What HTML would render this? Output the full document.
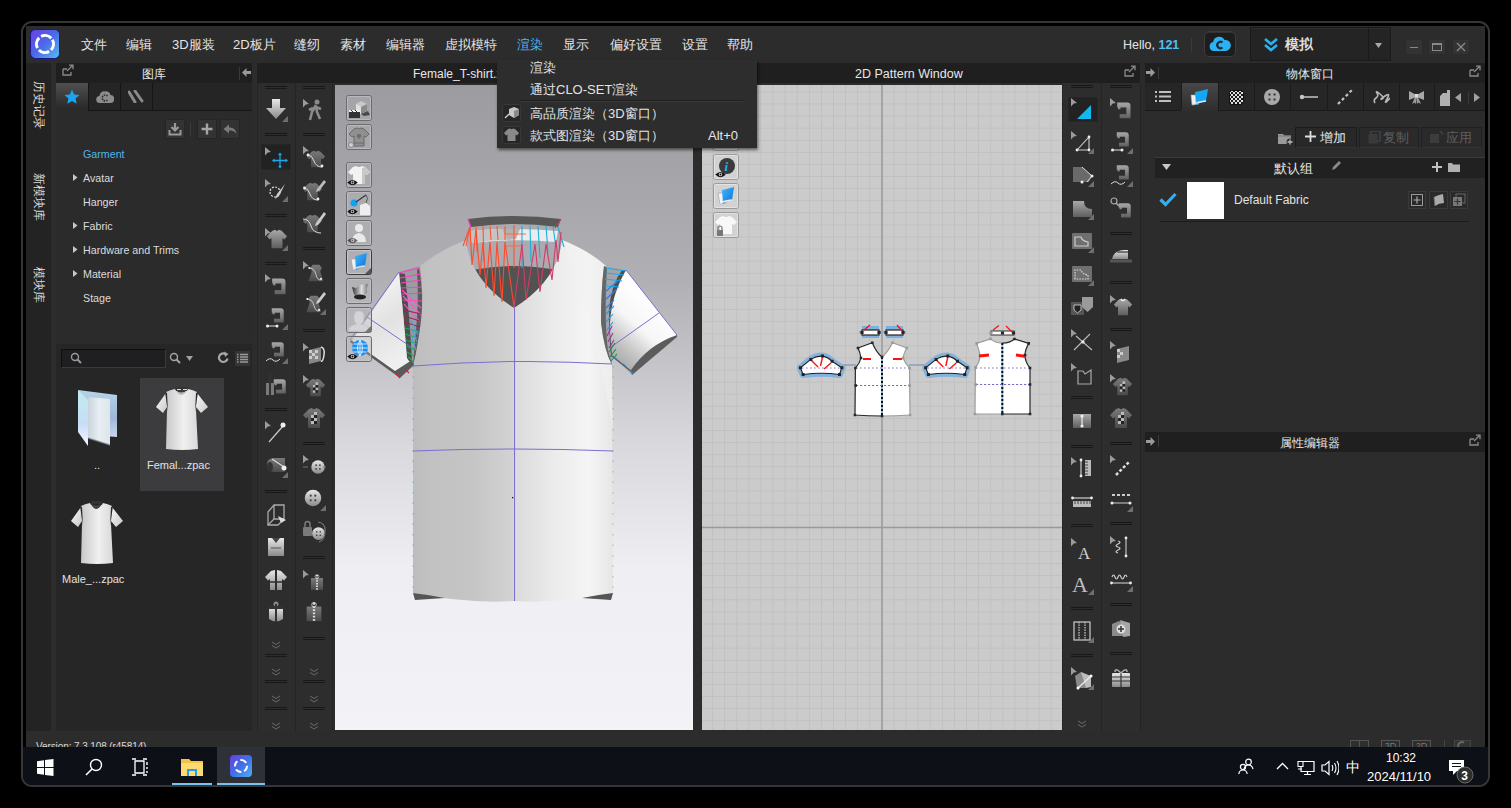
<!DOCTYPE html>
<html><head><meta charset="utf-8">
<style>
*{margin:0;padding:0;box-sizing:border-box}
html,body{width:1511px;height:808px;overflow:hidden;background:#000;font-family:"Liberation Sans",sans-serif;color:#e6e6e6;font-size:13px}
.a{position:absolute}
#frame{left:21px;top:21px;width:1469px;height:766px;border:2px solid #363636;border-radius:11px;background:#000}
#app{left:26px;top:26px;width:1459px;height:721px;background:#2c2c2c;overflow:hidden}
.hdr{background:#1f1f20;color:#e8e8e8;font-size:12px;text-align:center;line-height:20px}
.menu span{position:absolute;top:37px;font-size:13px;color:#e4e4e4;line-height:16px;white-space:nowrap}
.tb{background:#2d2d2d}
.ico{position:absolute;background:#8a8a8a}
</style></head><body>
<svg width="0" height="0" style="position:absolute">
<defs>
<linearGradient id="gG" x1="0" y1="0" x2="0" y2="1"><stop offset="0" stop-color="#a8a8a8"/><stop offset="1" stop-color="#5e5e5e"/></linearGradient>
<linearGradient id="gL" x1="0" y1="0" x2="0" y2="1"><stop offset="0" stop-color="#e8e8e8"/><stop offset="1" stop-color="#8a8a8a"/></linearGradient>
<linearGradient id="gD" x1="0" y1="0" x2="0" y2="1"><stop offset="0" stop-color="#7a7a7a"/><stop offset="1" stop-color="#4a4a4a"/></linearGradient>
<symbol id="ptr" viewBox="0 0 24 24"><path d="M1 1L7 6 3.8 6.5 1 9.5z" fill="#9c9c9c"/></symbol>
<symbol id="cor" viewBox="0 0 24 24"><path d="M24 18v6h-6z" fill="#6f6f6f"/></symbol>
<symbol id="sep" viewBox="0 0 22 4"><path d="M0 .5h22M0 2.5h22" stroke="#181818" stroke-width="1"/></symbol>
<symbol id="chev" viewBox="0 0 24 8"><path d="M8 1l4 2.5 4-2.5M8 4.5l4 2.5 4-2.5" stroke="#6a6a6a" stroke-width="1" fill="none"/></symbol>
<symbol id="tee" viewBox="0 0 24 24"><path d="M7 3L10 2Q12 4.5 14 2L17 3 23 9 20 12.5 18 11V22H6V11L4 12.5 1 9z" fill="url(#gG)"/></symbol>
<symbol id="teeD" viewBox="0 0 24 24"><path d="M7 3L10 2Q12 4.5 14 2L17 3 23 9 20 12.5 18 11V22H6V11L4 12.5 1 9z" fill="url(#gD)"/></symbol>
<symbol id="teeC" viewBox="0 0 24 24"><path d="M7 3L10 2Q12 4.5 14 2L17 3 23 9 20 12.5 18 11V22H6V11L4 12.5 1 9z" fill="url(#gD)"/><path d="M9 9h3v3H9zM12 12h3v3h-3zM9 15h3v3H9zM12 6h3v3h-3z" fill="#bbb"/><path d="M12 9h3v3h-3zM9 12h3v3H9zM12 15h3v3h-3z" fill="#222"/></symbol>
<symbol id="sew" viewBox="0 0 24 24"><path d="M5 3h12q4 0 4 4v15H8v-5h8V9H9v2H6V9H5z" fill="url(#gG)"/></symbol>
<symbol id="dress" viewBox="0 0 24 24"><path d="M8 2h8l3 4-2 4 4 12H3l4-12-2-4z" fill="url(#gD)"/><path d="M4 6q6 0 8 8t7 6" stroke="#ddd" stroke-width="1" fill="none"/><circle cx="4" cy="6" r="1.3" fill="#eee"/><circle cx="18" cy="19" r="1.3" fill="#eee"/></symbol>
<symbol id="btn" viewBox="0 0 24 24"><circle cx="12" cy="12" r="9" fill="url(#gL)"/><circle cx="9.5" cy="9.5" r="1.2" fill="#444"/><circle cx="14.5" cy="9.5" r="1.2" fill="#444"/><circle cx="9.5" cy="14.5" r="1.2" fill="#444"/><circle cx="14.5" cy="14.5" r="1.2" fill="#444"/></symbol>
<symbol id="zip" viewBox="0 0 24 24"><rect x="4" y="6" width="16" height="16" fill="url(#gD)"/><path d="M12 2v20" stroke="#ddd" stroke-width="2.5" stroke-dasharray="2 1.5"/><circle cx="12" cy="4" r="2.5" stroke="#ccc" fill="none"/></symbol>
<symbol id="vbox" viewBox="0 0 26 26"><rect x=".5" y=".5" width="25" height="25" rx="2" fill="#b4b4b8" fill-opacity=".35" stroke="#6c6c6e"/><rect x="1.5" y="1.5" width="23" height="23" rx="1" fill="none" stroke="#c8c8cc" stroke-opacity=".6"/></symbol>
<symbol id="eye" viewBox="0 0 12 8"><path d="M0 4Q6-2 12 4 6 10 0 4z" fill="#111"/><circle cx="6" cy="4" r="2" fill="#ddd"/><circle cx="6" cy="4" r="1.1" fill="#111"/></symbol>
</defs></svg>
<div class="a" id="frame"></div>
<div class="a" id="app"></div>

<!-- menu bar -->
<div class="a menu" style="left:0;top:0;width:1511px;height:63px">
  <svg class="a" style="left:30px;top:29px" width="30" height="30"><defs><linearGradient id="lg1" x1="0" y1="0" x2="1" y2="1"><stop offset="0" stop-color="#6a3fe0"/><stop offset=".5" stop-color="#4a6ae8"/><stop offset="1" stop-color="#58c0f5"/></linearGradient></defs><rect x=".5" y=".5" width="29" height="29" rx="5" fill="url(#lg1)" stroke="#1a1880"/><circle cx="15" cy="15" r="8.5" stroke="#fff" stroke-width="3" fill="none" stroke-dasharray="11 2.4" transform="rotate(-30 15 15)"/></svg>
  <span style="left:81px">文件</span>
  <span style="left:126px">编辑</span>
  <span style="left:172px">3D服装</span>
  <span style="left:233px">2D板片</span>
  <span style="left:294px">缝纫</span>
  <span style="left:340px">素材</span>
  <span style="left:386px">编辑器</span>
  <span style="left:445px">虚拟模特</span>
  <span style="left:517px;color:#4fb6f5">渲染</span>
  <span style="left:563px">显示</span>
  <span style="left:610px">偏好设置</span>
  <span style="left:682px">设置</span>
  <span style="left:727px">帮助</span>
  <span style="left:1123px;font-size:12.5px">Hello, <b style="font-weight:bold;color:#4fc0f8">121</b></span>
</div>


<div class="a" style="left:1191px;top:38px;width:1px;height:14px;background:#3a3a3a"></div>
<div class="a" style="left:1204px;top:31px;width:32px;height:26px;background:#1d1d1d;border:1px solid #3c3c3c;border-radius:5px;box-shadow:inset 0 1px 0 #333"></div>
<svg class="a" style="left:1209px;top:35px" width="22" height="17"><path d="M5 16a4.5 4.5 0 0 1-.8-8.9A6 6 0 0 1 15.5 5a4.8 4.8 0 0 1 1.5 11z" fill="#2ab2f2"/><path d="M13.5 7.5a3.2 3.2 0 1 0 0 5" stroke="#1d2a36" stroke-width="2.2" fill="none"/></svg>
<div class="a" style="left:1250px;top:27px;width:141px;height:34px;background:#242424;border:1px solid #1a1a1a;box-shadow:inset 0 1px 0 #2e2e2e"></div>
<div class="a" style="left:1368px;top:28px;width:1px;height:32px;background:#1a1a1a"></div>
<svg class="a" style="left:1263px;top:37px" width="16" height="16"><path d="M2 2l6 5 6-5M2 8l6 5 6-5" stroke="#2ab2f2" stroke-width="2.6" fill="none"/></svg>
<div class="a" style="left:1285px;top:36px;font-size:13.5px;line-height:17px;color:#dedede;font-weight:bold">模拟</div>
<svg class="a" style="left:1375px;top:43px" width="8" height="6"><path d="M0 0h7L3.5 5z" fill="#a8a8a8"/></svg>
<div class="a" style="left:1405px;top:39px;width:18px;height:16px;background:#333;border:1px solid #2a2a2a;border-radius:1px"></div>
<div class="a" style="left:1410px;top:47px;width:8px;height:1px;background:#8a8a8a"></div>
<div class="a" style="left:1428px;top:39px;width:18px;height:16px;background:#333;border:1px solid #2a2a2a;border-radius:1px"></div>
<div class="a" style="left:1432px;top:43px;width:10px;height:8px;border:1px solid #8a8a8a;border-top-width:2px"></div>
<div class="a" style="left:1452px;top:39px;width:18px;height:16px;background:#333;border:1px solid #2a2a2a;border-radius:1px"></div>
<svg class="a" style="left:1456px;top:42px" width="10" height="10"><path d="M1 1l8 8M9 1l-8 8" stroke="#8a8a8a" stroke-width="1.3"/></svg>
<!-- library panel -->
<div class="a hdr" style="left:56px;top:63px;width:196px;height:20px;line-height:23px">图库</div>
<svg class="a" style="left:62px;top:64px" width="12" height="12"><path d="M1 5h4M1 5v6h8V8" stroke="#8a8a8a" stroke-width="1.3" fill="none"/><path d="M5 7l5.5-5.5M7 1.2h4v4" stroke="#8a8a8a" stroke-width="1.3" fill="none"/></svg>
<div class="a" style="left:239px;top:67px;width:1px;height:13px;background:#3a3a3a"></div>
<svg class="a" style="left:242px;top:68px" width="10" height="9"><path d="M0 4.5L4.5 0v3h4.5v3h-4.5v3z" fill="#9a9a9a"/></svg>
<div class="a" style="left:56px;top:83px;width:196px;height:28px;background:#252525;border-bottom:1px solid #161616"></div>
<div class="a" style="left:56px;top:83px;width:32px;height:28px;background:linear-gradient(#505050,#2c2c2c 85%,#2b2b2b)"></div>
<div class="a" style="left:88px;top:83px;width:1px;height:27px;background:#151515"></div>
<div class="a" style="left:120px;top:83px;width:1px;height:27px;background:#151515"></div>
<div class="a" style="left:152px;top:83px;width:1px;height:27px;background:#151515"></div>
<svg class="a" style="left:64px;top:89px" width="16" height="16"><path d="M8 0.5l2.2 4.9 5.3.5-4 3.6 1.2 5.3L8 12 3.3 14.8l1.2-5.3-4-3.6 5.3-.5z" fill="#18a6f2"/></svg>
<svg class="a" style="left:96px;top:89px" width="18" height="15"><path d="M4 14a3.5 3.5 0 0 1-.5-7A4.5 4.5 0 0 1 9 2.5 4.5 4.5 0 0 1 14.5 6 3.8 3.8 0 0 1 14 14z" fill="#8c8c8c"/><path d="M11.5 7a3 3 0 1 0 0 4" stroke="#2a2a2a" stroke-width="1.6" fill="none" stroke-dasharray="1.5 1"/></svg>
<svg class="a" style="left:128px;top:90px" width="16" height="13"><path d="M1 2l6 10M7 1l7 10" stroke="#8a8a8a" stroke-width="3" stroke-linecap="round"/></svg>
<div class="a" style="left:56px;top:111px;width:196px;height:232px;background:#2b2b2b"></div>
<div class="a" style="left:165px;top:119px;width:20px;height:20px;background:#333;border:1px solid #262626"></div>
<svg class="a" style="left:167px;top:121px" width="16" height="16"><path d="M8 2v7M4.5 6l3.5 3.5L11.5 6" stroke="#9a9a9a" stroke-width="2.2" fill="none"/><path d="M2.5 9v4.5h11V9" stroke="#9a9a9a" stroke-width="2" fill="none"/></svg>
<div class="a" style="left:190px;top:123px;width:1px;height:13px;background:#3c3c3c"></div>
<div class="a" style="left:197px;top:119px;width:20px;height:20px;background:#333;border:1px solid #262626"></div>
<svg class="a" style="left:199px;top:121px" width="16" height="16"><path d="M8 2.5v11M2.5 8h11" stroke="#a5a5a5" stroke-width="2.4"/></svg>
<div class="a" style="left:220px;top:119px;width:20px;height:20px;background:#333;border:1px solid #262626"></div>
<svg class="a" style="left:222px;top:121px" width="16" height="16"><path d="M1.5 8L7 3.5v3C11 6.5 14 8.5 14.5 13 12.5 10 10.5 9.5 7 9.5v3z" fill="#7a7a7a"/></svg>
<div class="a tree" style="left:56px;top:111px;width:196px;height:232px;font-size:10.7px;color:#dcdcdc">
  <span class="a" style="left:27px;top:37px;color:#4fb4ee">Garment</span>
  <span class="a" style="left:27px;top:61px">Avatar</span>
  <span class="a" style="left:27px;top:85px">Hanger</span>
  <span class="a" style="left:27px;top:109px">Fabric</span>
  <span class="a" style="left:27px;top:133px">Hardware and Trims</span>
  <span class="a" style="left:27px;top:157px">Material</span>
  <span class="a" style="left:27px;top:181px">Stage</span>
  <svg class="a" style="left:17px;top:63px" width="5" height="8"><path d="M0 0l4.5 3.5L0 7z" fill="#c8c8c8"/></svg>
  <svg class="a" style="left:17px;top:111px" width="5" height="8"><path d="M0 0l4.5 3.5L0 7z" fill="#c8c8c8"/></svg>
  <svg class="a" style="left:17px;top:135px" width="5" height="8"><path d="M0 0l4.5 3.5L0 7z" fill="#c8c8c8"/></svg>
  <svg class="a" style="left:17px;top:159px" width="5" height="8"><path d="M0 0l4.5 3.5L0 7z" fill="#c8c8c8"/></svg>
</div>
<div class="a" style="left:56px;top:344px;width:196px;height:387px;background:#262626"></div>
<div class="a" style="left:61px;top:349px;width:105px;height:19px;background:#1f1f21;border-top:1px solid #0e0e0e;border-left:1px solid #0e0e0e;border-bottom:1px solid #3a3a3a;border-right:1px solid #3a3a3a"></div>
<svg class="a" style="left:70px;top:352px" width="12" height="12"><circle cx="5" cy="5" r="3.5" stroke="#9a9a9a" stroke-width="1.4" fill="none"/><path d="M7.5 7.5l3.5 3.5" stroke="#9a9a9a" stroke-width="2"/></svg>
<svg class="a" style="left:169px;top:352px" width="12" height="12"><circle cx="5" cy="5" r="3.5" stroke="#a5a5a5" stroke-width="1.4" fill="none"/><path d="M7.5 7.5l3.5 3.5" stroke="#a5a5a5" stroke-width="2"/></svg>
<svg class="a" style="left:186px;top:356px" width="8" height="6"><path d="M0 0h7L3.5 5z" fill="#a0a0a0"/></svg>
<svg class="a" style="left:217px;top:351px" width="13" height="13"><path d="M10.5 7.5A4.3 4.3 0 1 1 8.5 3" stroke="#a8a8a8" stroke-width="2.2" fill="none"/><path d="M7 0.5l4.5 2.5-3.5 3z" fill="#a8a8a8"/></svg>
<div class="a" style="left:235px;top:351px;width:15px;height:15px;background:#353535"></div>
<svg class="a" style="left:237px;top:353px" width="11" height="11"><path d="M0 1.5h1.5M3 1.5h8M0 4h1.5M3 4h8M0 6.5h1.5M3 6.5h8M0 9h1.5M3 9h8" stroke="#9a9a9a" stroke-width="1.5"/></svg>
<div class="a" style="left:140px;top:378px;width:84px;height:113px;background:#3c3c3e"></div>
<svg class="a" style="left:76px;top:388px" width="44" height="60">
 <defs><linearGradient id="fb" x1="0" y1="0" x2="0" y2="1"><stop offset="0" stop-color="#b8d2e6"/><stop offset=".6" stop-color="#9fb8d8"/><stop offset="1" stop-color="#c8d8ec"/></linearGradient>
 <linearGradient id="ff" x1="0" y1="0" x2="0" y2="1"><stop offset="0" stop-color="#c0ecee"/><stop offset=".6" stop-color="#c8dcf8"/><stop offset="1" stop-color="#f4f8ff"/></linearGradient>
 <linearGradient id="fp" x1="0" y1="0" x2="1" y2="0"><stop offset="0" stop-color="#c8d4dc"/><stop offset=".5" stop-color="#e8eef2"/><stop offset="1" stop-color="#dde6ee"/></linearGradient></defs>
 <path d="M2 2 L41 7 L41 49 L16 47Z" fill="url(#fb)"/>
 <path d="M12 9 L34 11 L34 57 L12 50Z" fill="url(#fp)"/>
 <path d="M2 2 L12 12 L12 58 L2 44Z" fill="url(#ff)"/>
 <path d="M12 50 L34 57" stroke="#7f8a96" stroke-width="1.5" opacity=".6"/>
</svg>
<span class="a" style="left:94px;top:459px;font-size:11px;color:#ddd">..</span>
<svg class="a" style="left:154px;top:385px" width="56" height="66">
 <defs><linearGradient id="tg" x1="0" y1="0" x2="1" y2="0"><stop offset="0" stop-color="#c8c8c8"/><stop offset=".55" stop-color="#f0f0f0"/><stop offset="1" stop-color="#d8d8d8"/></linearGradient>
 <linearGradient id="tsl" x1="0" y1="0" x2="1" y2="1"><stop offset="0" stop-color="#fafafa"/><stop offset="1" stop-color="#c8c8c8"/></linearGradient></defs>
 <path d="M12 8 L2 22 L9 28 L13 22Z" fill="url(#tsl)"/>
 <path d="M43 8 L54 22 L47 28 L42 22Z" fill="url(#tsl)"/>
 <path d="M12 7 Q16 5 21 4 Q27 12 34 4 Q39 5 43 7 L42 25 L44 64 Q28 66 12 64 L13 25Z" fill="url(#tg)"/>
 <path d="M11 7 L14 27 L13 8Z M44 7 L41 27 L42 8Z" fill="#2a2a2a"/>
 <path d="M21 3 Q27 1 34 3 L33 6 Q27 4 22 6Z" fill="#333"/>
 <path d="M23 4.5h4M29 4.5h4" stroke="#ddd" stroke-width="1"/>
 <path d="M22 6 Q27 14 33 6 Q27 9 22 6Z" fill="#bbb"/>
</svg>
<span class="a" style="left:147px;top:459px;font-size:11px;color:#e2e2e2">Femal...zpac</span>
<svg class="a" style="left:69px;top:499px" width="56" height="66">
 <path d="M12 8 L2 22 L9 28 L13 22Z" fill="url(#tsl)"/>
 <path d="M43 8 L54 22 L47 28 L42 22Z" fill="url(#tsl)"/>
 <path d="M12 7 Q16 5 21 4 Q27 14 34 4 Q39 5 43 7 L42 25 L44 64 Q28 66 12 64 L13 25Z" fill="url(#tg)"/>
 <path d="M11 7 L14 27 L13 8Z M44 7 L41 27 L42 8Z" fill="#2a2a2a"/>
 <path d="M21 3 Q27 1 34 3 L33 6 Q27 4 22 6Z" fill="#333"/>
 <path d="M22 5 Q27 15 33 5 Q27 8 22 5Z" fill="#444"/>
</svg>
<span class="a" style="left:62px;top:573px;font-size:11px;color:#e2e2e2">Male_...zpac</span>
<!-- vertical strip text -->
<div class="a" style="left:26px;top:63px;width:25px;height:668px;background:#232323"></div>
<div class="a" style="left:31px;top:105px;width:50px;height:15px;transform-origin:0 0;transform:rotate(90deg) translate(-24px,-15px);font-size:12px;line-height:15px;color:#ddd;white-space:nowrap">历史记录</div>
<div class="a" style="left:31px;top:197px;width:50px;height:15px;transform-origin:0 0;transform:rotate(90deg) translate(-24px,-15px);font-size:12px;line-height:15px;color:#ddd;white-space:nowrap">新模块库</div>
<div class="a" style="left:31px;top:285px;width:40px;height:15px;transform-origin:0 0;transform:rotate(90deg) translate(-18px,-15px);font-size:12px;line-height:15px;color:#ddd;white-space:nowrap">模块库</div>

<!-- 3D window -->
<div class="a hdr" style="left:257px;top:63px;width:436px;height:20px;line-height:23px;text-align:left;padding-left:156px">Female_T-shirt.zfab</div>
<div class="a tb" style="left:257px;top:83px;width:78px;height:648px;background:#2d2d2d"></div>
<div class="a" style="left:257px;top:83px;width:1px;height:648px;background:#252525"></div>
<div class="a" style="left:295px;top:83px;width:1px;height:648px;background:#242424"></div>
<div class="a" style="left:332px;top:83px;width:1px;height:648px;background:#242424"></div>
<div class="a" style="left:261px;top:144px;width:30px;height:26px;background:#222;border-radius:2px;border:1px solid #262626"></div>
<div class="a" style="left:335px;top:85px;width:358px;height:645px;background:linear-gradient(#9b9ba0 0%,#b0b0b4 30%,#d8d8dc 55%,#efeff3 75%,#f3f3f7 100%)"></div>
<svg class="a" style="left:335px;top:85px" width="358" height="645" viewBox="335 85 358 645">
<defs>
<linearGradient id="bodyG" x1="413" y1="0" x2="613" y2="0" gradientUnits="userSpaceOnUse">
<stop offset="0" stop-color="#bdbdbd"/><stop offset=".1" stop-color="#c2c2c2"/><stop offset=".3" stop-color="#c5c5c5"/><stop offset=".499" stop-color="#d3d3d3"/><stop offset=".501" stop-color="#dadada"/><stop offset=".7" stop-color="#ebebeb"/><stop offset=".88" stop-color="#f5f5f5"/><stop offset="1" stop-color="#e6e6e6"/></linearGradient>
<linearGradient id="slL" x1="360" y1="290" x2="405" y2="360" gradientUnits="userSpaceOnUse"><stop offset="0" stop-color="#f4f4f4"/><stop offset=".5" stop-color="#e2e2e2"/><stop offset="1" stop-color="#f0f0f0"/></linearGradient>
<linearGradient id="slR" x1="660" y1="315" x2="615" y2="365" gradientUnits="userSpaceOnUse"><stop offset="0" stop-color="#fdfdfd"/><stop offset=".35" stop-color="#f6f6f6"/><stop offset=".7" stop-color="#c4c4c4"/><stop offset="1" stop-color="#a4a4a4"/></linearGradient>
</defs>
<!-- collar back dark band -->
<path d="M468 219 Q514 213 561 219 L558 227 Q514 221 471 227 Z" fill="#585858"/>
<!-- neck interior -->
<path d="M466 228 Q514 222 562 228 L566 246 Q560 285 514 308 Q468 285 463 246 Z" fill="#ababaf"/>
<path d="M472 270 Q514 262 556 270 Q545 295 514 308 Q483 295 472 270 Z" fill="#525252"/>
<path d="M470 231 Q514 227 558 231 L556 242 Q514 238 472 243 Z" fill="#ececec"/>
<path d="M470 231 Q490 229 502 229 L507 240 Q490 240 472 243 Z" fill="#c4c4c4"/>
<path d="M502 229 L520 229 L516 239 L507 240Z" fill="#b2b2b6"/>
<!-- body -->
<path d="M420 266 Q440 250 466 240 Q470 280 514 308 Q558 280 562 240 Q588 250 606 266 Q600 295 601 322 Q604 350 612 365 L613 593 Q560 604 514 601 Q468 604 413 593 L413 365 Q418 345 421 320 Q424 295 420 266 Z" fill="url(#bodyG)"/>
<path d="M562 240 Q588 250 606 266 Q602 300 605 330 Q608 350 612 365 L613 430 Q590 300 562 240Z" fill="#f2f2f2" opacity=".6"/>
<!-- left gap -->
<path d="M398 272 L420 266 Q424 295 421 320 Q418 345 413 366 L406 358 Q405 320 398 272Z" fill="#9c9ca4"/>
<path d="M399 273 L405 274 Q410 320 412 362 L407 360 Q404 320 399 273Z" fill="#4e4e4e"/>
<path d="M419 268 Q424 295 421 320 Q418 345 413 366 L416 330 Q419 300 417 270Z" fill="#5a5a5a"/>
<!-- left sleeve -->
<path d="M399 272 Q404 320 407 358 L412 366 L400 378 L352 341 Z" fill="url(#slL)"/>
<path d="M351 340 L395 371 L412 360 L414 365 L400 378 L350 342Z" fill="#5a5a5a"/>
<path d="M396 374 L400 378M405 369 L409 373" stroke="#d02040" stroke-width="1.2"/>
<path d="M399 272 L350 340M367 317 L414 349" stroke="#7b6fd0" stroke-width="1" fill="none"/>
<!-- right gap -->
<path d="M604 266 L626 270 Q609 300 610 330 Q611 345 612 356 L612 365 Q604 350 601 322 Q601 290 604 266Z" fill="#a4a4ac"/>
<path d="M622 270 L626 270 Q612 300 613 330 Q613 345 614 358 L611 356 Q609 330 609 310 Q611 285 622 270Z" fill="#4e4e4e"/>
<path d="M604 266 Q601 290 601 322 Q604 350 612 365 L608 350 Q604 320 607 268Z" fill="#666"/>
<!-- right sleeve -->
<path d="M626 270 L677 335 L632 375 L612 356 Q611 345 610 330 Q609 300 626 270Z" fill="url(#slR)"/>
<path d="M677 335 Q648 345 631 370 L632 375 L677 337 Z" fill="#5c5c5c"/>
<path d="M626 270 L677 335M611 347 L659 313" stroke="#7b6fd0" stroke-width="1" fill="none"/>
<path d="M612 356 L632 372" stroke="#555" stroke-width="1.2"/><path d="M615 358 L617 360M623 364 L625 366M631 371 L633 374" stroke="#1a80e0" stroke-width="1.6"/>
<!-- body lines -->
<path d="M413 366 Q514 358 612 364" stroke="#7b6fd0" stroke-width="1.1" fill="none"/>
<path d="M413 451 Q514 447 613 451" stroke="#7b6fd0" stroke-width="1.1" fill="none"/>
<path d="M514.5 308 L514.5 601" stroke="#7b6fd0" stroke-width="1.1"/>
<path d="M413 366 V593" stroke="#30b070" stroke-width="1" stroke-dasharray="1.5 9" opacity=".6"/>
<path d="M613 366 V593" stroke="#807880" stroke-width="1" stroke-dasharray="1.5 9" opacity=".5"/>
<!-- hem corners -->
<path d="M413 593 Q430 595 445 598 L415 600Z" fill="#555"/>
<path d="M613 593 Q596 595 582 598 L611 600Z" fill="#555"/>
<!-- neck stitches -->
<g stroke-width="1.1" fill="none">
<path d="M470 227 L466 246M476 226 L477 252M483 226 L484 262M490 226 L491 240M497 226 L498 240M505 226 L505 240M514 225 L514 268" stroke="#ff5533"/>
<polyline points="463,246 470,227 472,265 476,230 480,275 483,242 486,288 490,242 494,296 497,242 502,302 505,242 514,307" stroke="#ff4a2c"/>
<path d="M504 234 H526 M506 246 H522" stroke="#ff6a3a"/>
<path d="M522 226 L522 268M530 226 L531 262M538 226 L540 258M546 226 L548 252M553 226 L556 248M558 227 L564 247" stroke="#18b0e4"/>
<polyline points="514,307 522,244 526,300 535,244 540,292 546,244 552,280 556,240 558,262 561,232" stroke="#d03c68"/>
<path d="M468 219 L471 227" stroke="#e040b0" stroke-width="1.3"/><path d="M561 219 L555 228" stroke="#c04050" stroke-width="1.2"/>
</g>
<!-- left armhole stitches -->
<g stroke-width="1.1">
<path d="M399 273 L419 268M400 278 L421 274M401 283 L421 280M401 288 L422 287M402 294 L422 293M403 300 L422 301" stroke="#ff40c0"/>
<path d="M402 290 L421 308M403 296 L421 315M404 304 L420 322" stroke="#ff55d0"/>
<path d="M404 310 L421 314M404 316 L420 321M404 322 L420 327" stroke="#a0205a"/>
<path d="M405 328 L419 332M405 334 L418 338M406 340 L417 344M406 346 L415 350M407 352 L414 356M408 357 L413 361" stroke="#18b050"/>
<path d="M411 320 L418 335M412 330 L417 342M412 338 L416 350" stroke="#4aa0e8"/>
</g>
<!-- right armhole stitches -->
<g stroke-width="1.1">
<path d="M606 268 L626 271M606 273 L624 275M605 279 L622 281M605 286 L619 287" stroke="#16b0e8"/>
<path d="M605 292 L620 279M605 300 L617 289M606 308 L614 300" stroke="#2a7ef0"/>
<path d="M606 314 L614 306M606 322 L613 314M607 330 L613 322" stroke="#1aa0e0"/>
<path d="M607 336 L612 326M608 342 L613 333M609 348 L614 340" stroke="#a030a0"/>
<path d="M609 352 L615 343M610 357 L616 349M611 361 L617 354" stroke="#208a50"/>
</g>
<path d="M512 497 h1.3 v1.3 h-1.3z" fill="#111"/>
</svg>
<svg class="a" style="left:265px;top:86px" width="22" height="4"><use href="#sep"/></svg>
<svg class="a" style="left:264px;top:98px" width="24" height="24" viewBox="0 0 24 24"><path d="M8 1h8v9h6l-10 11L2 10h6z" fill="url(#gL)"/><use href="#cor"/></svg>
<svg class="a" style="left:265px;top:133px" width="22" height="4"><use href="#sep"/></svg>
<svg class="a" style="left:264px;top:146px" width="24" height="24" viewBox="0 0 24 24"><use href="#ptr"/><path d="M16 8v13M9.5 14.5h13" stroke="#19a8f0" stroke-width="1.3"/><path d="M16 6.5l-2 2.5h4zM16 22.5l-2-2.5h4zM8 14.5l2.5-2v4zM24 14.5l-2.5-2v4z" fill="#19a8f0"/></svg>
<svg class="a" style="left:264px;top:178px" width="24" height="24" viewBox="0 0 24 24"><use href="#ptr"/><circle cx="11" cy="14" r="5" stroke="#ddd" stroke-width="1.2" stroke-dasharray="2 1.3" fill="none"/><path d="M21 6l-8 10-2 5 4-3z" fill="#cfcfcf"/><use href="#cor"/></svg>
<svg class="a" style="left:265px;top:214px" width="22" height="4"><use href="#sep"/></svg>
<svg class="a" style="left:264px;top:227px" width="24" height="24" viewBox="0 0 24 24"><use href="#ptr"/><use href="#tee" x="2" y="1" width="22" height="22"/><use href="#cor"/></svg>
<svg class="a" style="left:265px;top:262px" width="22" height="4"><use href="#sep"/></svg>
<svg class="a" style="left:264px;top:273px" width="24" height="24" viewBox="0 0 24 24"><use href="#ptr"/><use href="#sew" x="4" y="3" width="20" height="20"/></svg>
<svg class="a" style="left:264px;top:306px" width="24" height="24" viewBox="0 0 24 24"><use href="#sew" x="4" y="0" width="18" height="18"/><path d="M3 20h10" stroke="#ddd" stroke-width="1"/><circle cx="3.5" cy="20" r="1.5" fill="#eee"/><circle cx="13" cy="20" r="1.5" fill="#eee"/><use href="#cor"/></svg>
<svg class="a" style="left:264px;top:340px" width="24" height="24" viewBox="0 0 24 24"><use href="#sew" x="4" y="0" width="18" height="18"/><path d="M2 21q4-4 7-1t7-1" stroke="#ddd" stroke-width="1" fill="none"/><use href="#cor"/></svg>
<svg class="a" style="left:264px;top:373px" width="24" height="24" viewBox="0 0 24 24"><use href="#sew" x="6" y="4" width="18" height="18"/><path d="M2 10h8v12H2z" fill="#7a7a7a"/><path d="M6 1v22" stroke="#333" stroke-width="2"/></svg>
<svg class="a" style="left:265px;top:408px" width="22" height="4"><use href="#sep"/></svg>
<svg class="a" style="left:264px;top:420px" width="24" height="24" viewBox="0 0 24 24"><use href="#ptr"/><path d="M5 22L19 6" stroke="#ccc" stroke-width="1.2"/><circle cx="19" cy="5" r="2.5" fill="#eee"/></svg>
<svg class="a" style="left:264px;top:454px" width="24" height="24" viewBox="0 0 24 24"><path d="M3 10q0-6 8-6h10v14H11q-8 0-8-6z" fill="url(#gD)"/><ellipse cx="6" cy="13" rx="3" ry="5" fill="#333"/><path d="M8 5l12 8" stroke="#ddd" stroke-width="1.2"/><circle cx="20" cy="14" r="2.5" fill="#eee"/><use href="#cor"/></svg>
<svg class="a" style="left:265px;top:490px" width="22" height="4"><use href="#sep"/></svg>
<svg class="a" style="left:264px;top:502px" width="24" height="24" viewBox="0 0 24 24"><path d="M4 10l6-7h10v14l-6 6H4z" fill="none" stroke="#aaa" stroke-width="1.3"/><path d="M10 3v14h10M10 17l-6 6" stroke="#aaa" stroke-width="1.3" fill="none"/><path d="M14 14l8 4-5 3z" fill="#ddd"/></svg>
<svg class="a" style="left:264px;top:534px" width="24" height="24" viewBox="0 0 24 24"><path d="M4 4h16v18H4z" fill="url(#gL)"/><path d="M8 4l4 5 4-5" fill="#444"/><path d="M7 14h10" stroke="#555"/></svg>
<svg class="a" style="left:264px;top:568px" width="24" height="24" viewBox="0 0 24 24"><path d="M7 3L11 2V22H6V11L4 12.5 1 9zM17 3L13 2V22H18V11L20 12.5 23 9z" fill="url(#gL)"/><path d="M4 14h16" stroke="#2d2d2d" stroke-width="1.5"/></svg>
<svg class="a" style="left:264px;top:600px" width="24" height="24" viewBox="0 0 24 24"><path d="M5 7h14v12q-7 5-14 0z" fill="url(#gL)"/><circle cx="12" cy="4" r="2.5" fill="#888"/><path d="M12 4v18M5 8h14" stroke="#333" stroke-width="2"/></svg>
<svg class="a" style="left:264px;top:641px" width="24" height="8"><use href="#chev"/></svg>
<svg class="a" style="left:265px;top:654px" width="22" height="4"><use href="#sep"/></svg>
<svg class="a" style="left:264px;top:668px" width="24" height="8"><use href="#chev"/></svg>
<svg class="a" style="left:265px;top:680px" width="22" height="4"><use href="#sep"/></svg>
<svg class="a" style="left:264px;top:695px" width="24" height="8"><use href="#chev"/></svg>
<svg class="a" style="left:265px;top:707px" width="22" height="4"><use href="#sep"/></svg>
<svg class="a" style="left:264px;top:722px" width="24" height="8"><use href="#chev"/></svg>
<svg class="a" style="left:303px;top:86px" width="22" height="4"><use href="#sep"/></svg>
<svg class="a" style="left:302px;top:98px" width="24" height="24" viewBox="0 0 24 24"><use href="#ptr"/><circle cx="15" cy="4" r="2.5" fill="#8a8a8a"/><path d="M14 7l-4 7-2 8M14 8l1 6 3 7M11 10l-4 2M14 9l5 2" stroke="#8a8a8a" stroke-width="2.6" fill="none"/></svg>
<svg class="a" style="left:303px;top:133px" width="22" height="4"><use href="#sep"/></svg>
<svg class="a" style="left:302px;top:145px" width="24" height="24" viewBox="0 0 24 24"><use href="#ptr"/><use href="#teeD" x="4" y="4" width="20" height="20"/><path d="M6 10q4 0 6 6t8 6" stroke="#ddd" stroke-width="1" fill="none"/><circle cx="6" cy="10" r="1.4" fill="#eee"/><circle cx="20" cy="21" r="1.4" fill="#eee"/></svg>
<svg class="a" style="left:302px;top:178px" width="24" height="24" viewBox="0 0 24 24"><use href="#teeD" x="0" y="3" width="21" height="21"/><path d="M2 10q4 0 6 6t8 6" stroke="#ddd" stroke-width="1" fill="none"/><circle cx="2.5" cy="10" r="1.4" fill="#eee"/><circle cx="16" cy="21" r="1.4" fill="#eee"/><path d="M22 2l2 2-7 9-3 1 1-3z" fill="#bbb"/></svg>
<svg class="a" style="left:302px;top:211px" width="24" height="24" viewBox="0 0 24 24"><use href="#teeD" x="0" y="2" width="21" height="21"/><path d="M1 8q6 0 8 7t10 7" stroke="#ddd" stroke-width="1" fill="none"/><path d="M22 1l2 2-8 11-3 1 1-3z" fill="#ccc"/></svg>
<svg class="a" style="left:303px;top:247px" width="22" height="4"><use href="#sep"/></svg>
<svg class="a" style="left:302px;top:260px" width="24" height="24" viewBox="0 0 24 24"><use href="#ptr"/><use href="#dress" x="4" y="2" width="20" height="22"/></svg>
<svg class="a" style="left:302px;top:291px" width="24" height="24" viewBox="0 0 24 24"><use href="#dress" x="2" y="2" width="20" height="22"/><path d="M22 1l2 2-7 9-3 1 1-3z" fill="#ccc"/><use href="#cor"/></svg>
<svg class="a" style="left:303px;top:329px" width="22" height="4"><use href="#sep"/></svg>
<svg class="a" style="left:302px;top:342px" width="24" height="24" viewBox="0 0 24 24"><use href="#ptr"/><path d="M7 8l12-3v14l-12 3z" fill="#888"/><path d="M7 8h3v3H7zM10 11h3v3h-3zM7 14h3v3H7zM13 8h3v3h-3zM13 14h3v3h-3z" fill="#ccc"/><path d="M19 5q4 1 3 8t-3 6" stroke="#ddd" stroke-width="1.5" fill="none"/></svg>
<svg class="a" style="left:302px;top:374px" width="24" height="24" viewBox="0 0 24 24"><use href="#ptr"/><use href="#teeC" x="3" y="3" width="21" height="21"/></svg>
<svg class="a" style="left:302px;top:406px" width="24" height="24" viewBox="0 0 24 24"><use href="#teeC" x="0" y="0" width="24" height="24"/></svg>
<svg class="a" style="left:303px;top:442px" width="22" height="4"><use href="#sep"/></svg>
<svg class="a" style="left:302px;top:454px" width="24" height="24" viewBox="0 0 24 24"><use href="#ptr"/><use href="#btn" x="7" y="4" width="18" height="18"/><path d="M1 13h5M21 13h3" stroke="#777"/></svg>
<svg class="a" style="left:302px;top:487px" width="24" height="24" viewBox="0 0 24 24"><use href="#btn" x="0" y="0" width="22" height="22"/><use href="#cor"/></svg>
<svg class="a" style="left:302px;top:519px" width="24" height="24" viewBox="0 0 24 24"><rect x="1" y="8" width="9" height="9" rx="1" fill="#7a7a7a"/><path d="M3 8V5a2.5 2.5 0 0 1 5 0v3" stroke="#7a7a7a" stroke-width="1.5" fill="none"/><use href="#btn" x="8" y="6" width="17" height="17"/><path d="M16 3q8 1 7 10t-6 10" stroke="#777" stroke-width="1.2" fill="none"/></svg>
<svg class="a" style="left:303px;top:556px" width="22" height="4"><use href="#sep"/></svg>
<svg class="a" style="left:302px;top:569px" width="24" height="24" viewBox="0 0 24 24"><use href="#ptr"/><use href="#zip" x="6" y="3" width="18" height="21"/></svg>
<svg class="a" style="left:302px;top:600px" width="24" height="24" viewBox="0 0 24 24"><use href="#zip" x="1" y="0" width="22" height="24"/></svg>
<svg class="a" style="left:303px;top:637px" width="22" height="4"><use href="#sep"/></svg>
<svg class="a" style="left:302px;top:668px" width="24" height="8"><use href="#chev"/></svg>
<svg class="a" style="left:303px;top:680px" width="22" height="4"><use href="#sep"/></svg>
<svg class="a" style="left:302px;top:695px" width="24" height="8"><use href="#chev"/></svg>
<svg class="a" style="left:303px;top:707px" width="22" height="4"><use href="#sep"/></svg>
<svg class="a" style="left:302px;top:722px" width="24" height="8"><use href="#chev"/></svg>
<svg class="a" style="left:346px;top:95px" width="26" height="26"><use href="#vbox"/><path d="M10 9l5-3 6 3v7l-6 3-5-3z" fill="#c8c8c8"/><path d="M15 12l6-3v7l-6 3z" fill="#8a8a8a"/><path d="M10 9l5 3v7l-5-3z" fill="#e0e0e0"/><path d="M15 19l7-3 2 4-6 1z" fill="#222" opacity=".7"/><rect x="3" y="15" width="11" height="8" fill="#333"/><path d="M3 15h11v2H3z" fill="#eee"/><path d="M5 15l2 2M9 15l2 2" stroke="#333"/></svg>
<svg class="a" style="left:346px;top:124px" width="26" height="26"><use href="#vbox"/><path d="M8 5L11 4Q13 6 15 4L18 5 23 10 20 13 18 12V22H8V12L6 13 3 10z" fill="#909090" stroke="#6a6a6a"/><path d="M11 10h4v3l-2 2-2-2z" fill="#6f6f6f"/><path d="M8 19h10" stroke="#6a6a6a"/><circle cx="5" cy="21" r="2.5" fill="#d0d0d0" stroke="#888"/></svg>
<svg class="a" style="left:346px;top:162px" width="26" height="26"><use href="#vbox"/><path d="M7 5L10 4Q13 6 16 4L19 5 24 10 21 13 19 12V22H7V12L5 13 2 10z" fill="#f2f2f2"/><path d="M16 6l3-1 5 5-3 3-2-1v10h-3z" fill="#c8c8c8"/><use href="#eye" x="1" y="17" width="11" height="7"/></svg>
<svg class="a" style="left:346px;top:191px" width="26" height="26"><use href="#vbox"/><circle cx="8" cy="12" r="3.5" fill="#13a0f0"/><path d="M10 11l10-7" stroke="#333" stroke-width="1.2"/><path d="M20 4q3 3 0 8" stroke="#555" fill="none"/><path d="M14 14l6-2 4 3v9h-10z" fill="#eee"/><use href="#eye" x="1" y="17" width="11" height="7"/></svg>
<svg class="a" style="left:346px;top:220px" width="26" height="26"><use href="#vbox"/><circle cx="13" cy="8" r="4" fill="#eaeaea"/><path d="M6 22q0-8 7-9 7 1 7 9z" fill="#eaeaea"/><use href="#eye" x="1" y="17" width="11" height="7" opacity=".6"/></svg>
<svg class="a" style="left:346px;top:249px" width="26" height="26"><rect x=".5" y=".5" width="25" height="25" rx="2" fill="#b0b0b6" fill-opacity=".5" stroke="#3c3c3c"/><rect x="1.5" y="1.5" width="23" height="23" rx="1" fill="none" stroke="#d0d0d4" stroke-opacity=".7"/><linearGradient id="bfab" x1="0" y1="0" x2="1" y2="1"><stop offset="0" stop-color="#40b8ff"/><stop offset="1" stop-color="#0a70d8"/></linearGradient><path d="M5 10h6l2 10-6 1z" fill="#f0f0f0" stroke="#999" stroke-width=".6"/><path d="M9 7q5-1 12-3l-2 13q-6 1-9 4z" fill="url(#bfab)"/><path d="M7 20q4-2 12-3" stroke="#ddd" stroke-width="1.5" fill="none"/><path d="M25 19v6h-6z" fill="#555"/></svg>
<svg class="a" style="left:346px;top:278px" width="26" height="26"><use href="#vbox"/><linearGradient id="dfab" x1="0" y1="0" x2="1" y2="0"><stop offset="0" stop-color="#333"/><stop offset=".6" stop-color="#ddd"/><stop offset="1" stop-color="#777"/></linearGradient><path d="M6 9l4 1q6-5 12-4 -2 5-1 9 -4 4-11 5 -3-5-4-11z" fill="url(#dfab)"/><ellipse cx="14" cy="19" rx="6" ry="2.5" fill="#222"/></svg>
<svg class="a" style="left:346px;top:307px" width="26" height="26"><use href="#vbox"/><path d="M13 4q5 0 5 6t-3 7q5 1 8 4v3H3v-3q3-3 8-4-3-1-3-7t5-6z" fill="#d4d4d8" stroke="#c0c0c4" stroke-width=".6"/><path d="M25 19v6h-6z" fill="#777"/></svg>
<svg class="a" style="left:346px;top:336px" width="26" height="26"><use href="#vbox"/><circle cx="14" cy="12" r="8" fill="#1b8ff0"/><path d="M6 12h16M14 4v16M7.5 8h13M7.5 16h13M14 4q-5 8 0 16M14 4q5 8 0 16" stroke="#dff0ff" stroke-width=".9" fill="none"/><use href="#eye" x="1" y="17" width="11" height="7"/></svg>


<!-- 2D window -->
<div class="a hdr" style="left:702px;top:63px;width:438px;height:20px;line-height:23px;text-align:left;padding-left:153px;font-size:12.5px">2D Pattern Window</div>
<svg class="a" style="left:1124px;top:65px" width="12" height="12"><path d="M1 5h4M1 5v6h8V8" stroke="#8a8a8a" stroke-width="1.3" fill="none"/><path d="M5 7l5.5-5.5M7 1.2h4v4" stroke="#8a8a8a" stroke-width="1.3" fill="none"/></svg>
<div class="a" style="left:702px;top:85px;width:360px;height:645px;background-color:#cbcbcb;background-image:linear-gradient(90deg,#c0c0c0 1px,transparent 1px),linear-gradient(#c0c0c0 1px,transparent 1px);background-size:12.1px 12.1px;background-position:10.1px 6.4px"></div>
<svg class="a" style="left:702px;top:85px" width="360" height="645" viewBox="702 85 360 645">
<path d="M882 85 V730" stroke="#9a9a9a" stroke-width="1.5"/>
<path d="M702 527.5 H1062" stroke="#9a9a9a" stroke-width="1.5"/>
<path d="M842 365 H856 M909 365 H926" stroke="#8aa0b8" stroke-width="1.5"/>
<g transform="translate(0,0)">
<path d="M800.4 367.8 L810.8 359.4 Q816 356 822.5 356.1 Q828 357 832.1 361.3 L841.8 367.8 L839.5 374.5 Q821 372 803.1 374.5 Z" fill="none" stroke="#7db0dd" stroke-width="7" stroke-linejoin="round" opacity=".95"/>
<path d="M800.4 367.8 L810.8 359.4 Q816 356 822.5 356.1 Q828 357 832.1 361.3 L841.8 367.8 L839.5 374.5 Q821 372 803.1 374.5 Z" fill="#fff" stroke="#222" stroke-width="1.1"/>
<path d="M811 360 L818 367M822.5 357 L820.5 366M831 363 L824 369" stroke="#ff1010" stroke-width="1.4"/>
<path d="M802 368 H840" stroke="#8a78cc" stroke-width="1.2" stroke-dasharray="1.6 2.4"/>
<path d="M800.4 367.8h.01M810.8 359.4h.01M822.5 356.1h.01M832.1 361.3h.01M841.8 367.8h.01M839.5 374.5h.01M803.1 374.5h.01" stroke="#222" stroke-width="3" stroke-linecap="square"/>
</g><g transform="translate(125.3,0)">
<path d="M800.4 367.8 L810.8 359.4 Q816 356 822.5 356.1 Q828 357 832.1 361.3 L841.8 367.8 L839.5 374.5 Q821 372 803.1 374.5 Z" fill="none" stroke="#7db0dd" stroke-width="7" stroke-linejoin="round" opacity=".95"/>
<path d="M800.4 367.8 L810.8 359.4 Q816 356 822.5 356.1 Q828 357 832.1 361.3 L841.8 367.8 L839.5 374.5 Q821 372 803.1 374.5 Z" fill="#fff" stroke="#222" stroke-width="1.1"/>
<path d="M811 360 L818 367M822.5 357 L820.5 366M831 363 L824 369" stroke="#ff1010" stroke-width="1.4"/>
<path d="M802 368 H840" stroke="#8a78cc" stroke-width="1.2" stroke-dasharray="1.6 2.4"/>
<path d="M800.4 367.8h.01M810.8 359.4h.01M822.5 356.1h.01M832.1 361.3h.01M841.8 367.8h.01M839.5 374.5h.01M803.1 374.5h.01" stroke="#222" stroke-width="3" stroke-linecap="square"/>
</g>
<!-- front body -->
<path d="M858 348 L872.3 342.7 Q876 352 882 357 Q888 352 892.5 342.7 L906.8 348 Q904 352 903 358 Q905 363 909.5 368 L910 415 Q896 416 882 416 Q868 416 855 415 L855.4 368 Q860 363 861 358 Q860 352 858 348 Z" fill="#fff"/>
<path d="M882 357 Q876 352 872.3 342.7 L858 348 Q860 352 861 358 Q860 363 855.4 368 L855 415 Q868 416 882 416" fill="none" stroke="#262626" stroke-width="1.2"/>
<path d="M882 357 Q888 352 892.5 342.7 L906.8 348 Q904 352 903 358 Q905 363 909.5 368 L910 415 Q896 416 882 416" fill="none" stroke="#9c9c9c" stroke-width="1.2"/>
<path d="M882 357 V416" stroke="#7fb8e8" stroke-width="2"/>
<path d="M882 357 V416" stroke="#111" stroke-width="2" stroke-dasharray="2 2"/>
<path d="M863 359 H871 M893 359 H902" stroke="#ff1010" stroke-width="1.8"/>
<path d="M856 368 H909" stroke="#8a78cc" stroke-width="1.2" stroke-dasharray="1.6 2.4"/>
<path d="M856 385.5 H909" stroke="#7a6ac8" stroke-width="1" stroke-dasharray="2.2 1.8"/>
<path d="M858 348h.01M872.3 342.7h.01M861 358h.01M855.4 368h.01M855.7 385.5h.01M855 415h.01M882 416h.01M882 357h.01" stroke="#262626" stroke-width="2.6" stroke-linecap="square"/>
<path d="M892.5 342.7h.01M906.8 348h.01M903 358h.01M909.5 368h.01M909.7 385.5h.01M910 415h.01" stroke="#9a9a9a" stroke-width="2.6" stroke-linecap="square"/>
<!-- front collars -->
<rect x="862" y="326" width="17" height="12" fill="#7db0dd"/>
<rect x="886" y="326" width="17" height="12" fill="#7db0dd"/>
<path d="M859 332 H906" stroke="#7db0dd" stroke-width="1.5"/>
<rect x="862" y="330" width="17" height="5" fill="#fff" stroke="#222" stroke-width="1.2"/>
<rect x="886" y="330" width="17" height="5" fill="#fff" stroke="#222" stroke-width="1.2"/>
<path d="M862 332.5h.01M879 332.5h.01M886 332.5h.01M903 332.5h.01" stroke="#262626" stroke-width="3.2" stroke-linecap="square"/>
<path d="M864 330 L870 325M897 325 L902 331" stroke="#ff1010" stroke-width="1.3"/>
<!-- back body -->
<path d="M976.7 343.4 L990.4 338.9 Q995 343 1002.3 343.1 Q1010 343 1014.4 339 L1028.7 343.4 Q1025 350 1025 355 Q1025 362 1030 368 L1030 414 L975 414 L975.4 367.5 Q980 362 980 355 Q979 350 976.7 343.4Z" fill="#fff"/>
<path d="M1002.3 343.1 Q995 343 990.4 338.9 L976.7 343.4 Q979 350 980 355 Q980 362 975.4 367.5 L975 414 H1002.3" fill="none" stroke="#9c9c9c" stroke-width="1.2"/>
<path d="M1002.3 343.1 Q1010 343 1014.4 339 L1028.7 343.4 Q1025 350 1025 355 Q1025 362 1030 368 L1030 414 H1002.3" fill="none" stroke="#262626" stroke-width="1.2"/>
<path d="M1002.3 343 V414" stroke="#7fb8e8" stroke-width="2"/>
<path d="M1002.3 343 V414" stroke="#111" stroke-width="2" stroke-dasharray="2 2"/>
<path d="M979 356 L989 355 M1016 355 L1026 356.5" stroke="#ff1010" stroke-width="3"/>
<path d="M976 368 H1029" stroke="#8a78cc" stroke-width="1.2" stroke-dasharray="1.6 2.4"/>
<path d="M976 384.5 H1029" stroke="#7a6ac8" stroke-width="1" stroke-dasharray="2.2 1.8"/>
<path d="M976.7 343.4h.01M990.4 338.9h.01M975.4 367.5h.01M975.6 384.5h.01M975 414h.01" stroke="#9a9a9a" stroke-width="2.6" stroke-linecap="square"/>
<path d="M1014.4 339h.01M1028.7 343.4h.01M1025 355h.01M1030 368h.01M1030 384.5h.01M1030 414h.01M1002.3 414h.01" stroke="#262626" stroke-width="2.6" stroke-linecap="square"/>
<rect x="991" y="331" width="23" height="4" fill="#fff" stroke="#333" stroke-width="1"/>
<path d="M991 333h.01" stroke="#999" stroke-width="3.2" stroke-linecap="square"/>
<path d="M1002.5 333h.01M1013.5 333h.01" stroke="#262626" stroke-width="3.2" stroke-linecap="square"/>
<path d="M993 330 L999 325.5M1006 326 L1012 332" stroke="#ff1010" stroke-width="1.2"/>
</svg>
<div class="a tb" style="left:1062px;top:83px;width:78px;height:648px"></div>
<div class="a" style="left:1062px;top:83px;width:1px;height:648px;background:#252525"></div>
<div class="a" style="left:1101px;top:83px;width:1px;height:648px;background:#242424"></div>
<div class="a" style="left:1140px;top:83px;width:1px;height:648px;background:#242424"></div>
<div class="a" style="left:1068px;top:97px;width:30px;height:25px;background:#222;border-radius:2px;border:1px solid #262626"></div>
<svg class="a" style="left:1071px;top:85px" width="22" height="4"><use href="#sep"/></svg>
<svg class="a" style="left:1070px;top:97px" width="24" height="24" viewBox="0 0 24 24"><use href="#ptr"/><path d="M21 8v14H7z" fill="#12b8f0"/></svg>
<svg class="a" style="left:1070px;top:130px" width="24" height="24" viewBox="0 0 24 24"><use href="#ptr"/><path d="M7 20L19 7v13z" fill="none" stroke="#ccc" stroke-width="1.1"/><circle cx="7" cy="20" r="1.4" fill="#eee"/><circle cx="19" cy="7" r="1.4" fill="#eee"/><circle cx="19" cy="20" r="1.4" fill="#eee"/><use href="#cor"/></svg>
<svg class="a" style="left:1070px;top:163px" width="24" height="24" viewBox="0 0 24 24"><path d="M3 4h9l10 9-3 6H3z" fill="#6a6a6a"/><path d="M12 4l10 9-5 6" stroke="#ddd" stroke-width="1" fill="none"/><circle cx="12" cy="19" r="1.5" fill="#eee"/><circle cx="22" cy="13" r="1.5" fill="#eee"/><use href="#cor"/></svg>
<svg class="a" style="left:1070px;top:196px" width="24" height="24" viewBox="0 0 24 24"><path d="M3 5h11q0 8 8 8v8H3z" fill="url(#gG)"/><use href="#cor"/></svg>
<svg class="a" style="left:1070px;top:229px" width="24" height="24" viewBox="0 0 24 24"><rect x="2" y="4" width="20" height="16" rx="1" fill="#6f6f6f"/><path d="M5 17V8h6q1 4 7 5v4z" fill="none" stroke="#ccc" stroke-width="1.2"/><use href="#cor"/></svg>
<svg class="a" style="left:1070px;top:262px" width="24" height="24" viewBox="0 0 24 24"><rect x="2" y="4" width="20" height="16" rx="1" fill="#6f6f6f"/><path d="M5 17V8h6q1 4 7 5v4z" fill="none" stroke="#ddd" stroke-width="1.2" stroke-dasharray="1.5 1.2"/><use href="#cor"/></svg>
<svg class="a" style="left:1070px;top:294px" width="24" height="24" viewBox="0 0 24 24"><rect x="1" y="8" width="13" height="13" fill="#555"/><path d="M4 11h7v5l-3.5 3L4 16z" fill="#222" stroke="#ccc" stroke-width=".9"/><path d="M12 3h11v10l-5.5 5L12 13z" fill="#9a9a9a"/></svg>
<svg class="a" style="left:1070px;top:328px" width="24" height="24" viewBox="0 0 24 24"><use href="#ptr"/><path d="M4 22L20 6M6 8l16 14" stroke="#bbb" stroke-width="1.1"/><circle cx="13" cy="14" r="1.6" fill="#eee"/></svg>
<svg class="a" style="left:1070px;top:362px" width="24" height="24" viewBox="0 0 24 24"><use href="#ptr"/><path d="M8 9h5l2 3 6-4v14H8z" fill="none" stroke="#aaa" stroke-width="1.2"/></svg>
<svg class="a" style="left:1071px;top:396px" width="22" height="4"><use href="#sep"/></svg>
<svg class="a" style="left:1070px;top:409px" width="24" height="24" viewBox="0 0 24 24"><rect x="3" y="5" width="18" height="14" fill="url(#gG)"/><path d="M12 7v10" stroke="#eee" stroke-width="1.2"/><circle cx="12" cy="7" r="1.6" fill="#eee"/><circle cx="12" cy="17" r="1.6" fill="#eee"/></svg>
<svg class="a" style="left:1071px;top:445px" width="22" height="4"><use href="#sep"/></svg>
<svg class="a" style="left:1070px;top:456px" width="24" height="24" viewBox="0 0 24 24"><use href="#ptr"/><path d="M11 4v16" stroke="#ddd" stroke-width="1.1"/><circle cx="11" cy="4" r="1.4" fill="#eee"/><circle cx="11" cy="20" r="1.4" fill="#eee"/><rect x="15" y="4" width="6" height="16" fill="#bbb"/><path d="M15 6h3M15 9h3M15 12h3M15 15h3M15 18h3" stroke="#444"/></svg>
<svg class="a" style="left:1070px;top:490px" width="24" height="24" viewBox="0 0 24 24"><path d="M2 8h20" stroke="#ddd" stroke-width="1.1"/><circle cx="2.5" cy="8" r="1.4" fill="#eee"/><circle cx="21.5" cy="8" r="1.4" fill="#eee"/><rect x="3" y="11" width="18" height="6" fill="#bbb"/><path d="M5 11v3M8 11v3M11 11v3M14 11v3M17 11v3M20 11v3" stroke="#444"/></svg>
<svg class="a" style="left:1071px;top:524px" width="22" height="4"><use href="#sep"/></svg>
<svg class="a" style="left:1070px;top:537px" width="24" height="24" viewBox="0 0 24 24"><use href="#ptr"/><text x="8" y="22" font-family="Liberation Serif" font-size="17" fill="#d0d0d0">A</text></svg>
<svg class="a" style="left:1070px;top:571px" width="24" height="24" viewBox="0 0 24 24"><text x="2" y="21" font-family="Liberation Serif" font-size="22" fill="#bdbdbd">A</text><use href="#cor"/></svg>
<svg class="a" style="left:1071px;top:607px" width="22" height="4"><use href="#sep"/></svg>
<svg class="a" style="left:1070px;top:619px" width="24" height="24" viewBox="0 0 24 24"><rect x="4" y="3" width="16" height="18" fill="none" stroke="#ccc" stroke-width="1.2"/><path d="M9 3v18M15 3v18" stroke="#ccc" stroke-width="1.2" stroke-dasharray="1.5 1"/><use href="#cor"/></svg>
<svg class="a" style="left:1071px;top:654px" width="22" height="4"><use href="#sep"/></svg>
<svg class="a" style="left:1070px;top:666px" width="24" height="24" viewBox="0 0 24 24"><use href="#ptr"/><path d="M5 10l6-4 5 3v13H7z" fill="#8a8a8a"/><path d="M11 6l10 4v11l-5 1z" fill="#bdbdbd"/><path d="M8 22l13-12" stroke="#eee" stroke-width="1.2"/><circle cx="8" cy="22" r="1.5" fill="#fff"/><circle cx="21" cy="10" r="1.5" fill="#fff"/><use href="#cor"/></svg>
<svg class="a" style="left:1070px;top:720px" width="24" height="8"><use href="#chev"/></svg>
<svg class="a" style="left:1110px;top:85px" width="22" height="4"><use href="#sep"/></svg>
<svg class="a" style="left:1109px;top:97px" width="24" height="24" viewBox="0 0 24 24"><use href="#ptr"/><use href="#sew" x="4" y="3" width="20" height="20"/></svg>
<svg class="a" style="left:1109px;top:130px" width="24" height="24" viewBox="0 0 24 24"><use href="#sew" x="4" y="0" width="18" height="18"/><path d="M3 20h10" stroke="#ddd" stroke-width="1"/><circle cx="3.5" cy="20" r="1.5" fill="#eee"/><circle cx="13" cy="20" r="1.5" fill="#eee"/><use href="#cor"/></svg>
<svg class="a" style="left:1109px;top:163px" width="24" height="24" viewBox="0 0 24 24"><use href="#sew" x="4" y="0" width="18" height="18"/><path d="M2 21q4-4 7-1t7-1" stroke="#ddd" stroke-width="1" fill="none"/><use href="#cor"/></svg>
<svg class="a" style="left:1109px;top:196px" width="24" height="24" viewBox="0 0 24 24"><circle cx="5" cy="5" r="3" stroke="#aaa" stroke-width="1.2" fill="none"/><path d="M7 7l3 3" stroke="#aaa" stroke-width="1.5"/><use href="#sew" x="6" y="5" width="18" height="18"/></svg>
<svg class="a" style="left:1110px;top:232px" width="22" height="4"><use href="#sep"/></svg>
<svg class="a" style="left:1109px;top:244px" width="24" height="24" viewBox="0 0 24 24"><path d="M3 15q2-9 12-9h4v9z" fill="url(#gL)"/><path d="M8 8h11" stroke="#333" stroke-width="1.2"/><path d="M1 17h22" stroke="#555" stroke-width="3"/></svg>
<svg class="a" style="left:1110px;top:281px" width="22" height="4"><use href="#sep"/></svg>
<svg class="a" style="left:1109px;top:294px" width="24" height="24" viewBox="0 0 24 24"><use href="#ptr"/><use href="#tee" x="4" y="3" width="20" height="20"/><path d="M12 5q2 3 4 0" stroke="#eee" stroke-width="1.5" fill="none"/></svg>
<svg class="a" style="left:1110px;top:328px" width="22" height="4"><use href="#sep"/></svg>
<svg class="a" style="left:1109px;top:340px" width="24" height="24" viewBox="0 0 24 24"><use href="#ptr"/><path d="M8 9l12-3v14l-12 3z" fill="#888"/><path d="M8 9h3v3H8zM11 12h3v3h-3zM8 15h3v3H8z" fill="#ccc"/></svg>
<svg class="a" style="left:1109px;top:373px" width="24" height="24" viewBox="0 0 24 24"><use href="#ptr"/><use href="#teeC" x="3" y="3" width="21" height="21"/></svg>
<svg class="a" style="left:1109px;top:406px" width="24" height="24" viewBox="0 0 24 24"><use href="#teeC" x="0" y="0" width="24" height="24"/></svg>
<svg class="a" style="left:1110px;top:442px" width="22" height="4"><use href="#sep"/></svg>
<svg class="a" style="left:1109px;top:454px" width="24" height="24" viewBox="0 0 24 24"><use href="#ptr"/><path d="M7 21L21 7" stroke="#ddd" stroke-width="2.5" stroke-dasharray="3 2"/></svg>
<svg class="a" style="left:1109px;top:488px" width="24" height="24" viewBox="0 0 24 24"><path d="M3 7h18" stroke="#ccc" stroke-width="2" stroke-dasharray="3 2"/><path d="M3 15h18" stroke="#ccc" stroke-width="1"/><circle cx="3" cy="15" r="1.5" fill="#eee"/><circle cx="21" cy="15" r="1.5" fill="#eee"/><use href="#cor"/></svg>
<svg class="a" style="left:1110px;top:522px" width="22" height="4"><use href="#sep"/></svg>
<svg class="a" style="left:1109px;top:535px" width="24" height="24" viewBox="0 0 24 24"><use href="#ptr"/><path d="M9 6q4 1 0 3t0 3 0 3 0 3" stroke="#ccc" stroke-width="1.2" fill="none"/><path d="M17 3v18" stroke="#ccc" stroke-width="1.1"/><circle cx="17" cy="3" r="1.4" fill="#eee"/><circle cx="17" cy="21" r="1.4" fill="#eee"/></svg>
<svg class="a" style="left:1109px;top:568px" width="24" height="24" viewBox="0 0 24 24"><path d="M3 9q1.5-4 3 0t3 0 3 0 3 0 3 0" stroke="#ccc" stroke-width="1.2" fill="none"/><path d="M2 15h20" stroke="#ccc" stroke-width="1.1"/><circle cx="2.5" cy="15" r="1.4" fill="#eee"/><circle cx="21.5" cy="15" r="1.4" fill="#eee"/><use href="#cor"/></svg>
<svg class="a" style="left:1110px;top:603px" width="22" height="4"><use href="#sep"/></svg>
<svg class="a" style="left:1109px;top:616px" width="24" height="24" viewBox="0 0 24 24"><path d="M3 8l7-3 4 2v13H3z" fill="#8a8a8a"/><path d="M11 4l10 3v13l-7 1z" fill="#a5a5a5"/><circle cx="12" cy="13" r="4.5" fill="#ddd"/><path d="M12 10v6M9 13h6" stroke="#333" stroke-width="1.5"/></svg>
<svg class="a" style="left:1110px;top:652px" width="22" height="4"><use href="#sep"/></svg>
<svg class="a" style="left:1109px;top:665px" width="24" height="24" viewBox="0 0 24 24"><rect x="3" y="8" width="18" height="14" rx="1" fill="url(#gL)"/><path d="M3 12h18M3 16h18M12 8v14" stroke="#333" stroke-width="1.2"/><path d="M12 8q-6-6-6-1M12 8q6-6 6-1" stroke="#aaa" stroke-width="1.5" fill="none"/></svg>
<svg class="a" style="left:713px;top:125px" width="26" height="26"><rect x=".5" y=".5" width="25" height="25" rx="2" fill="#d2d2d2" stroke="#9a9a9a"/><rect x="1.5" y="1.5" width="23" height="23" rx="1" fill="none" stroke="#e2e2e2"/></svg>
<svg class="a" style="left:713px;top:154px" width="26" height="26"><rect x=".5" y=".5" width="25" height="25" rx="2" fill="#d2d2d2" stroke="#9a9a9a"/><rect x="1.5" y="1.5" width="23" height="23" rx="1" fill="none" stroke="#e2e2e2"/><circle cx="14" cy="12" r="8" fill="#3a3a3a"/><text x="11.5" y="17" font-family="Liberation Serif" font-style="italic" font-weight="bold" font-size="13" fill="#18b4f5">i</text><use href="#eye" x="2" y="17" width="11" height="7"/></svg>
<svg class="a" style="left:713px;top:183px" width="26" height="26"><rect x=".5" y=".5" width="25" height="25" rx="2" fill="#d2d2d2" stroke="#9a9a9a"/><rect x="1.5" y="1.5" width="23" height="23" rx="1" fill="none" stroke="#e2e2e2"/><path d="M5 10h6l2 10-6 1z" fill="#f4f4f4" stroke="#999" stroke-width=".6"/><path d="M9 7q5-1 12-3l-2 13q-6 1-9 4z" fill="url(#bfab)"/><path d="M7 20q4-2 12-3" stroke="#eee" stroke-width="1.5" fill="none"/></svg>
<svg class="a" style="left:713px;top:212px" width="26" height="26"><rect x=".5" y=".5" width="25" height="25" rx="2" fill="#d2d2d2" stroke="#9a9a9a"/><rect x="1.5" y="1.5" width="23" height="23" rx="1" fill="none" stroke="#e2e2e2"/><path d="M7 5L10 4Q13 6 16 4L19 5 24 10 21 13 19 12V22H7V12L5 13 2 10z" fill="#f8f8f8"/><rect x="4" y="18" width="6" height="6" fill="#777"/><path d="M5 18v-2a2 2 0 0 1 4 0v2" stroke="#777" stroke-width="1.2" fill="none"/></svg>

<!-- object window -->
<div class="a" style="left:1141px;top:63px;width:4px;height:668px;background:#2b2b2b"></div>
<div class="a" style="left:1145px;top:63px;width:340px;height:668px;background:#2c2c2c"></div>
<div class="a hdr" style="left:1145px;top:63px;width:340px;height:20px;line-height:23px;padding-right:10px">物体窗口</div>
<svg class="a" style="left:1146px;top:68px" width="9" height="9"><path d="M9 4.5L4.5 0v3h-4.5v3h4.5v3z" fill="#9a9a9a"/></svg>
<div class="a" style="left:1158px;top:67px;width:1px;height:12px;background:#3a3a3a"></div>
<svg class="a" style="left:1469px;top:65px" width="12" height="12"><path d="M1 5h4M1 5v6h8V8" stroke="#8a8a8a" stroke-width="1.3" fill="none"/><path d="M5 7l5.5-5.5M7 1.2h4v4" stroke="#8a8a8a" stroke-width="1.3" fill="none"/></svg>
<div class="a" style="left:1145px;top:83px;width:340px;height:28px;background:#262626;border-bottom:1px solid #1a1a1a"></div>
<div class="a" style="left:1181px;top:83px;width:37px;height:28px;background:linear-gradient(#474747,#2e2e2e)"></div>
<div class="a" style="left:1181px;top:83px;width:1px;height:27px;background:#1b1b1b"></div>
<div class="a" style="left:1218px;top:83px;width:1px;height:27px;background:#1b1b1b"></div>
<div class="a" style="left:1254px;top:83px;width:1px;height:27px;background:#1b1b1b"></div>
<div class="a" style="left:1290px;top:83px;width:1px;height:27px;background:#1b1b1b"></div>
<div class="a" style="left:1327px;top:83px;width:1px;height:27px;background:#1b1b1b"></div>
<div class="a" style="left:1363px;top:83px;width:1px;height:27px;background:#1b1b1b"></div>
<div class="a" style="left:1399px;top:83px;width:1px;height:27px;background:#1b1b1b"></div>
<div class="a" style="left:1434px;top:83px;width:1px;height:27px;background:#1b1b1b"></div>
<svg class="a" style="left:1155px;top:90px" width="16" height="14"><path d="M0 2h2M4 2h12M0 6.5h2M4 6.5h12M0 11h2M4 11h12" stroke="#c0c0c0" stroke-width="1.8"/></svg>
<svg class="a" style="left:1189px;top:88px" width="20" height="18"><path d="M2 7h6l2 9-7 1z" fill="#f0f0f0" stroke="#aaa" stroke-width=".6"/><path d="M6 4q6-1 13-3l-2 12q-6 1-10 4z" fill="#14a8f4"/><path d="M4 16q5-2 13-3" stroke="#e8e8e8" stroke-width="1.3" fill="none"/></svg>
<svg class="a" style="left:1229px;top:90px" width="15" height="15"><defs><pattern id="chk" width="4" height="4" patternUnits="userSpaceOnUse"><rect width="4" height="4" fill="#e0e0e0"/><rect width="2" height="2" fill="#1a1a1a"/><rect x="2" y="2" width="2" height="2" fill="#1a1a1a"/></pattern></defs><rect x=".5" y=".5" width="14" height="14" rx="2" fill="url(#chk)" stroke="#111"/></svg>
<svg class="a" style="left:1263px;top:88px" width="18" height="18"><circle cx="9" cy="9" r="8" fill="#a8a8a8"/><circle cx="6.5" cy="6.5" r="1.2" fill="#444"/><circle cx="11.5" cy="6.5" r="1.2" fill="#444"/><circle cx="6.5" cy="11.5" r="1.2" fill="#444"/><circle cx="11.5" cy="11.5" r="1.2" fill="#444"/></svg>
<svg class="a" style="left:1299px;top:94px" width="20" height="6"><path d="M3 3h16" stroke="#bdbdbd" stroke-width="1.6"/><circle cx="3" cy="3" r="2.2" fill="#c8c8c8"/></svg>
<svg class="a" style="left:1336px;top:88px" width="18" height="18"><path d="M2 16L16 2" stroke="#c0c0c0" stroke-width="2.2" stroke-dasharray="3 2.5"/></svg>
<svg class="a" style="left:1372px;top:88px" width="18" height="18"><path d="M3 15q-2-3 1-5t1-5 3 1 2 5 3-3 2 3 3-1" stroke="#b8b8b8" stroke-width="1.6" fill="none"/></svg>
<svg class="a" style="left:1408px;top:89px" width="17" height="16"><path d="M8.5 6L1 2v9l7.5-3 7.5 3V2z" fill="#a8a8a8"/><path d="M7 8l-3 7 2.5-1.5L8 15l.5-7zM10 8l3 7-2.5-1.5L9 15l-.5-7z" fill="#9a9a9a"/><rect x="7" y="5" width="3" height="3.5" fill="#ddd"/></svg>
<svg class="a" style="left:1437px;top:89px" width="14" height="17"><path d="M3 7l3-3h4v-3h3v16H3z" fill="#b0b0b0"/></svg>
<div class="a" style="left:1450px;top:84px;width:35px;height:26px;background:#262626"></div>
<svg class="a" style="left:1455px;top:93px" width="7" height="10"><path d="M6 0v9L0 4.5z" fill="#a0a0a0"/></svg>
<div class="a" style="left:1468px;top:92px;width:1px;height:12px;background:#3a3a3a"></div>
<svg class="a" style="left:1474px;top:93px" width="7" height="10"><path d="M0 0v9l6-4.5z" fill="#a0a0a0"/></svg>
<!-- buttons -->
<svg class="a" style="left:1277px;top:131px" width="17" height="15"><path d="M1 3h5l1.5 1.5H14V13H1z" fill="#9a9a9a"/><path d="M1 5h13" stroke="#777"/><circle cx="13" cy="11" r="3.5" fill="#2c2c2c"/><path d="M13 8.5v5M10.5 11h5" stroke="#bbb" stroke-width="1.3"/></svg>
<div class="a" style="left:1295px;top:127px;width:62px;height:21px;background:#282828;border:1px solid #1c1c1c;border-bottom-color:#333"></div>
<svg class="a" style="left:1305px;top:131px" width="11" height="11"><path d="M5.5 0v11M0 5.5h11" stroke="#ddd" stroke-width="1.8"/></svg>
<div class="a" style="left:1320px;top:129px;font-size:13px;line-height:17px;color:#e8e8e8">增加</div>
<div class="a" style="left:1359px;top:127px;width:60px;height:21px;background:#2a2a2a;border:1px solid #1f1f1f;border-bottom-color:#333"></div>
<svg class="a" style="left:1368px;top:131px" width="13" height="13"><rect x="3" y="0" width="9" height="10" fill="none" stroke="#444" stroke-width="1.4"/><rect x="0.5" y="3" width="9" height="9.5" fill="#3a3a3a"/></svg>
<div class="a" style="left:1383px;top:129px;font-size:13px;line-height:17px;color:#5e5e5e">复制</div>
<div class="a" style="left:1421px;top:127px;width:61px;height:21px;background:#2a2a2a;border:1px solid #1f1f1f;border-bottom-color:#333"></div>
<svg class="a" style="left:1430px;top:131px" width="14" height="13"><rect x="0" y="3" width="9" height="9" fill="#3c3c3c"/><path d="M10 0l3 3" stroke="#444" stroke-width="1.4"/></svg>
<div class="a" style="left:1446px;top:129px;font-size:13px;line-height:17px;color:#5e5e5e">应用</div>
<!-- group header -->
<div class="a" style="left:1155px;top:157px;width:330px;height:1px;background:#3a3a3a"></div>
<div class="a" style="left:1155px;top:158px;width:330px;height:20px;background:#212121"></div>
<svg class="a" style="left:1162px;top:164px" width="10" height="7"><path d="M0 0h9L4.5 6z" fill="#c8c8c8"/></svg>
<div class="a" style="left:1274px;top:160px;font-size:13px;line-height:17px;color:#e8e8e8">默认组</div>
<svg class="a" style="left:1331px;top:161px" width="10" height="10"><path d="M1 9l1-3 6-6 2 2-6 6z" fill="#8a8a8a"/></svg>
<svg class="a" style="left:1432px;top:162px" width="10" height="10"><path d="M5 0v10M0 5h10" stroke="#c0c0c0" stroke-width="2"/></svg>
<svg class="a" style="left:1448px;top:162px" width="12" height="10"><path d="M0 1h4l1 1.5h7V10H0z" fill="#b0b0b0"/></svg>
<!-- fabric row -->
<svg class="a" style="left:1159px;top:192px" width="18" height="15"><path d="M1.5 7.5l5 5L16.5 2" stroke="#2fb0f0" stroke-width="3.2" fill="none"/></svg>
<div class="a" style="left:1187px;top:182px;width:37px;height:37px;background:#fff"></div>
<div class="a" style="left:1234px;top:192px;font-size:12px;line-height:16px;color:#e2e2e2">Default Fabric</div>
<div class="a" style="left:1408px;top:191px;width:18px;height:18px;background:#2a2a2a;border:1px solid #3a3a3a"></div>
<svg class="a" style="left:1411px;top:194px" width="12" height="12"><rect x=".5" y=".5" width="11" height="11" fill="none" stroke="#999"/><path d="M6 2.5v7M2.5 6h7" stroke="#aaa" stroke-width="1.2"/></svg>
<div class="a" style="left:1429px;top:191px;width:19px;height:18px;background:#2a2a2a;border:1px solid #3a3a3a"></div>
<svg class="a" style="left:1432px;top:193px" width="13" height="14"><path d="M2 4q4-2 9-3l1 9q-5 0-9 3z" fill="#aaa"/><path d="M2 4l1 9" stroke="#777"/></svg>
<div class="a" style="left:1450px;top:191px;width:18px;height:18px;background:#2a2a2a;border:1px solid #3a3a3a"></div>
<svg class="a" style="left:1452px;top:193px" width="14" height="14"><rect x="4" y="1" width="9" height="9" fill="none" stroke="#666"/><rect x="1" y="4" width="9" height="9" fill="#777"/><path d="M5.5 5.5v6M2.5 8.5h6" stroke="#333" stroke-width="1.2"/></svg>
<div class="a" style="left:1160px;top:221px;width:309px;height:1px;background:#1c1c1c"></div>
<!-- property editor -->
<div class="a hdr" style="left:1145px;top:432px;width:340px;height:20px;line-height:23px;padding-right:10px">属性编辑器</div>
<svg class="a" style="left:1146px;top:437px" width="9" height="9"><path d="M9 4.5L4.5 0v3h-4.5v3h4.5v3z" fill="#9a9a9a"/></svg>
<div class="a" style="left:1158px;top:435px;width:1px;height:12px;background:#3a3a3a"></div>
<svg class="a" style="left:1469px;top:434px" width="12" height="12"><path d="M1 5h4M1 5v6h8V8" stroke="#8a8a8a" stroke-width="1.3" fill="none"/><path d="M5 7l5.5-5.5M7 1.2h4v4" stroke="#8a8a8a" stroke-width="1.3" fill="none"/></svg>

<!-- status bar -->
<div class="a" style="left:26px;top:731px;width:1459px;height:16px;background:#2c2c2c;overflow:hidden">
 <span class="a" style="left:10px;top:9px;font-size:10px;line-height:13px;color:#d8d8d8;white-space:nowrap;letter-spacing:-.1px">Version: 7.3.108 (r45814)</span>
 <div class="a" style="left:1324px;top:9px;width:19px;height:12px;border:1px solid #555;background:#2e2e2e"></div>
 <div class="a" style="left:1333px;top:9px;width:1px;height:8px;background:#555"></div>
 <div class="a" style="left:1355px;top:9px;width:19px;height:12px;border:1px solid #555;background:#2e2e2e;font-size:9px;color:#777;text-align:center;line-height:10px">3D</div>
 <div class="a" style="left:1386px;top:9px;width:19px;height:12px;border:1px solid #555;background:#2e2e2e;font-size:9px;color:#777;text-align:center;line-height:10px">2D</div>
 <div class="a" style="left:1418px;top:9px;width:1px;height:8px;background:#444"></div>
 <div class="a" style="left:1428px;top:9px;width:17px;height:12px;border:1px solid #444;background:#333"></div><svg class="a" style="left:1431px;top:10px" width="12" height="8"><path d="M9 6A4 4 0 1 1 7 1.5" stroke="#666" stroke-width="2" fill="none"/></svg>
</div>
<!-- taskbar -->
<div class="a" style="left:23px;top:747px;width:1465px;height:38px;background:#0d1016;border-radius:0 0 9px 9px"></div>
<svg class="a" style="left:37px;top:759px" width="17" height="17"><path d="M0 2.3L7 1.3V8H0zM8 1.1L16.5 0V8H8zM0 9h7v6.7L0 14.7zM8 9h8.5V17L8 15.9z" fill="#fff"/></svg>
<svg class="a" style="left:85px;top:758px" width="18" height="18"><circle cx="11" cy="7" r="5.5" stroke="#fff" stroke-width="1.4" fill="none"/><path d="M7 11l-6 6" stroke="#fff" stroke-width="1.6"/></svg>
<svg class="a" style="left:132px;top:758px" width="18" height="18"><path d="M3 3h9v12H3z" stroke="#fff" stroke-width="1.3" fill="none"/><path d="M0 1h4M0 17h4M11 1h4M11 17h4M15 4v3M15 9v2M15 13v2" stroke="#fff" stroke-width="1.4"/></svg>
<div class="a" style="left:172px;top:783px;width:40px;height:2px;background:#7cc0f0"></div>
<svg class="a" style="left:180px;top:757px" width="24" height="20"><path d="M1 2h8l2 2h12v15H1z" fill="#f5c443"/><path d="M1 6h22v13H1z" fill="#fcdb72"/><path d="M7 12h10v7H7z" fill="#2a9cf0"/><path d="M9 14h6v5H9z" fill="#fcdb72"/></svg>
<div class="a" style="left:217px;top:747px;width:48px;height:38px;background:#2e3138"></div>
<div class="a" style="left:217px;top:783px;width:48px;height:2px;background:#7cc0f0"></div>
<div class="a" style="left:230px;top:755px;width:22px;height:22px;border-radius:4px;background:linear-gradient(135deg,#6a3ee0,#3f6fe8 50%,#4fb0f0)"></div>
<div class="a" style="left:234px;top:759px;width:14px;height:14px;border-radius:50%;border:2.5px dashed #fff"></div>
<svg class="a" style="left:1238px;top:758px" width="16" height="17"><circle cx="10.5" cy="4" r="2.8" stroke="#fff" stroke-width="1.2" fill="none"/><path d="M6 11q1-4 4.5-4t4.5 4" stroke="#fff" stroke-width="1.2" fill="none"/><circle cx="5" cy="9" r="2.6" stroke="#fff" stroke-width="1.2" fill="none"/><path d="M0.8 16q0.5-4 4.2-4t4.2 4" stroke="#fff" stroke-width="1.2" fill="none"/></svg>
<svg class="a" style="left:1276px;top:762px" width="13" height="8"><path d="M1 7l5.5-5.5L12 7" stroke="#fff" stroke-width="1.3" fill="none"/></svg>
<svg class="a" style="left:1297px;top:760px" width="18" height="15"><path d="M4 1.5h13v10H4zM10.5 11.5v3M7 14.5h7" stroke="#fff" stroke-width="1.2" fill="none"/><path d="M1 1.5h5v5H1z" fill="#0d1016" stroke="#fff" stroke-width="1.1"/><path d="M1 9h4" stroke="#fff"/></svg>
<svg class="a" style="left:1321px;top:760px" width="18" height="16"><path d="M1 5h3l4-3.5v13L4 11H1z" stroke="#fff" stroke-width="1.2" fill="none"/><path d="M11 5q1.5 3 0 6M13.5 3q3 5 0 10M16 1q4 7 0 14" stroke="#fff" stroke-width="1.1" fill="none"/></svg>
<div class="a" style="left:1346px;top:758px;font-size:14px;line-height:18px;color:#fff">中</div>
<div class="a" style="left:1386px;top:751px;font-size:12px;line-height:14px;color:#fff">10:32</div>
<div class="a" style="left:1367px;top:770px;font-size:13px;line-height:14px;color:#fff">2024/11/10</div>
<svg class="a" style="left:1448px;top:759px" width="28" height="26"><path d="M1 1h15v11H9l-4 4v-4H1z" fill="#fff"/><path d="M4 4.5h9M4 7.5h9" stroke="#0d1016" stroke-width="1.2"/><circle cx="17" cy="16" r="8" fill="#2d2d2d" stroke="#6a6a6a" stroke-width="1"/><text x="13.3" y="20.5" font-family="Liberation Sans" font-weight="bold" font-size="12" fill="#fff">3</text></svg>
<!-- dropdown -->
<div class="a" style="left:497px;top:60px;width:260px;height:88px;background:#2d2d2d;box-shadow:1px 2px 3px rgba(0,0,0,.55)">
 <span class="a" style="left:33px;top:0px;line-height:16px;font-size:13px;color:#e4e4e4;top:0;height:16px;margin-top:0;transform:translateY(0)"></span>
</div>
<div class="a" style="left:530px;top:59px;font-size:13px;line-height:17px;color:#e4e4e4;white-space:nowrap">渲染</div>
<div class="a" style="left:530px;top:81px;font-size:13px;line-height:17px;color:#e4e4e4;white-space:nowrap">通过CLO-SET渲染</div>
<div class="a" style="left:520px;top:100px;width:223px;height:1px;background:#1f1f1f"></div>
<div class="a" style="left:520px;top:101px;width:223px;height:1px;background:#383838"></div>
<div class="a" style="left:502px;top:104px;width:19px;height:18px;background:#262626;border:1px solid #383838;border-radius:2px"></div>
<svg class="a" style="left:503px;top:105px" width="17" height="16"><path d="M6 4l5-2 5 2v6l-5 3-5-3z" fill="#c8c8c8"/><path d="M11 6l5-2v6l-5 3z" fill="#8a8a8a"/><path d="M2 13l4-4" stroke="#ccc" stroke-width="1.5"/></svg>
<div class="a" style="left:530px;top:105px;font-size:13px;line-height:17px;color:#e4e4e4;white-space:nowrap">高品质渲染（3D窗口）</div>
<div class="a" style="left:502px;top:126px;width:19px;height:18px;background:#262626;border:1px solid #383838;border-radius:2px"></div>
<svg class="a" style="left:503px;top:127px" width="17" height="16"><path d="M5 2L7 1.5Q8.5 3 10 1.5L12 2 16 6 14 8.5 12.5 7.5V14H4.5V7.5L3 8.5 1 6z" fill="#8a8a8a"/></svg>
<div class="a" style="left:530px;top:127px;font-size:13px;line-height:17px;color:#e4e4e4;white-space:nowrap">款式图渲染（3D窗口）</div>
<div class="a" style="left:708px;top:127px;font-size:13px;line-height:17px;color:#e4e4e4;white-space:nowrap">Alt+0</div>

</body></html>
